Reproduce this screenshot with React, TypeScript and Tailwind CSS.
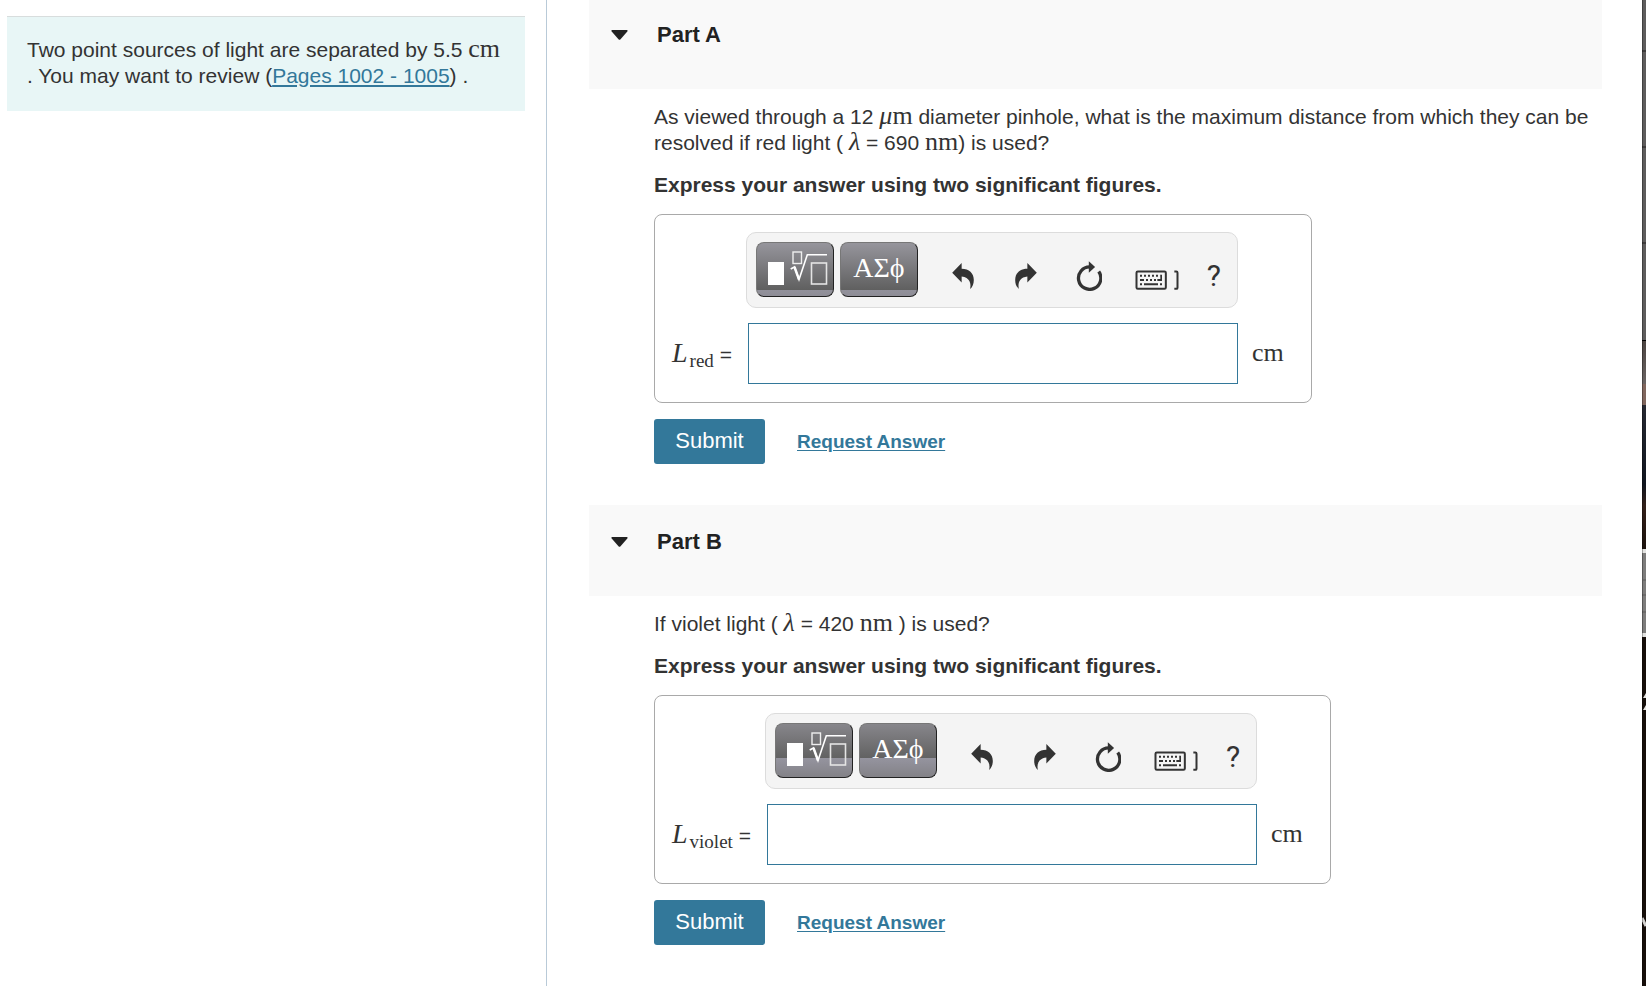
import type { ReactNode } from "react"
import { useState } from "react"

function MathText({ children, italic = false }: { children: ReactNode; italic?: boolean }) {
  return (
    <span className={`font-["Liberation_Serif",serif] text-[26px] leading-[0] ${italic ? "italic" : ""}`}>
      {children}
    </span>
  )
}

function TemplateIcon() {
  return (
    <svg width="76" height="53" viewBox="1 1 76 53" fill="none" stroke="#fff" aria-hidden="true">
      <rect x="12" y="20" width="16" height="23" fill="#fff" stroke="none" />
      <rect x="37" y="10" width="8.5" height="11.5" stroke="#eee" strokeWidth="1.4" />
      <path d="M34.7 27 L38.5 25 L43 37.5 L51.3 12.8 H71" strokeWidth="1.6" />
      <path d="M38.5 25 L43 37.5" strokeWidth="2.4" />
      <rect x="55.5" y="21" width="15" height="21" stroke="#e4e4e4" strokeWidth="1.6" />
    </svg>
  )
}

function UndoIcon({ flip = false }: { flip?: boolean }) {
  return (
    <svg width="22" height="26" viewBox="0 0 64 77" fill="#333" className={flip ? "-scale-x-100" : ""} aria-hidden="true">
      <path d="M0 29 L28 0 V17 C50 17 64 30 64 50 C64 62 60 71 53 77 C57 62 52 42 28 40 V58 Z" />
    </svg>
  )
}

function ResetIcon() {
  return (
    <svg width="26" height="30" viewBox="0 0 79 89" fill="none" aria-hidden="true">
      <path d="M42 17 A34 34 0 1 0 69 31" stroke="#333" strokeWidth="10" />
      <path d="M39 0 L58 17 L39 35 Z" fill="#333" />
    </svg>
  )
}

function KeyboardIcon() {
  return (
    <svg width="44" height="28" viewBox="0 -24 132 84" fill="none" stroke="#333" aria-hidden="true">
      <rect x="4.5" y="4.5" width="88" height="52" rx="4" strokeWidth="6" />
      <path d="M15 17.5 H76" strokeWidth="6" strokeDasharray="6 6" />
      <path d="M15 30 H27 M33 30 H39 M45 30 H51 M57 30 H63 M67 30 H81" strokeWidth="6" />
      <path d="M78.5 14 V33" strokeWidth="5" />
      <path d="M15 42.5 H21 M27 42.5 H69 M75 42.5 H81" strokeWidth="6" />
      <path d="M118 4.5 H124 Q127.5 4.5 127.5 8 V53 Q127.5 56.5 124 56.5 H118" strokeWidth="6" />
    </svg>
  )
}

function Toolbar({ shade }: { shade: string }) {
  const dark = `flex h-[55px] w-[78px] items-center justify-center rounded-lg border border-t-[#777] border-l-[#777] border-r-[#222] border-b-[#222] text-white ${shade}`

  return (
    <div className="flex h-[76px] items-start rounded-[10px] border border-[#dcdcdc] bg-[#f4f4f4] pt-[9px] pr-[10px] pl-[9px]">
      <div className="flex gap-[6px]">
        <button type="button" className={dark} aria-label="Templates">
          <TemplateIcon />
        </button>
        <button type="button" className={`${dark} pb-1 font-["Liberation_Serif",serif] text-[28px] leading-none`}>
          ΑΣϕ
        </button>
      </div>
      <div className="ml-[21px] flex h-[68px] items-center gap-[15px]">
        <button type="button" className="flex w-12 justify-center" aria-label="Undo">
          <UndoIcon />
        </button>
        <button type="button" className="flex w-12 justify-center" aria-label="Redo">
          <UndoIcon flip />
        </button>
        <button type="button" className="flex w-12 justify-center" aria-label="Reset">
          <ResetIcon />
        </button>
        <button type="button" className="flex w-[58px] justify-center" aria-label="Keyboard shortcuts">
          <KeyboardIcon />
        </button>
        <button type="button" className='w-[26px] text-center font-["Roboto",sans-serif] text-[30px] leading-none' aria-label="Help">
          ?
        </button>
      </div>
    </div>
  )
}

type PartProps = {
  id: string
  title: string
  subscript: string
  headerClass: string
  shade: string
  children: ReactNode
}

function Part({ id, title, subscript, headerClass, shade, children }: PartProps) {
  const [answer, setAnswer] = useState("")

  return (
    <section>
      <header className={`flex items-start bg-[#f9f9f9] pl-[22px] ${headerClass}`}>
        <button type="button" className="flex h-[26px] items-center" aria-label={`Toggle ${title}`}>
          <svg width="17" height="10" viewBox="0 0 17 10" fill="#222" aria-hidden="true">
            <path d="M1 0 H16 Q17 0.5 16.3 1.5 L9.5 9.3 Q8.5 10.3 7.5 9.3 L0.7 1.5 Q0 0.5 1 0 Z" />
          </svg>
        </button>
        <h2 className="ml-[29px] text-[22px] leading-[26px] font-bold text-[#222]">{title}</h2>
      </header>

      <form className="pt-[15px] pb-[41px] pl-[65px]" onSubmit={(e) => e.preventDefault()}>
        <p>{children}</p>
        <p className="mt-4 font-bold">Express your answer using two significant figures.</p>

        {/* Answer box */}
        <div className="mt-4 grid w-fit grid-cols-[auto_auto_auto] items-center gap-y-[15px] rounded-lg border border-[#a9a9a9] pt-[17px] pr-[27px] pb-[18px] pl-[17px]">
          <div className="col-start-2">
            <Toolbar shade={shade} />
          </div>
          <label htmlFor={id} className="col-start-1 pr-[14px] whitespace-nowrap">
            <span className='font-["Liberation_Serif",serif] text-[28px] leading-none italic'>L</span>
            <sub className='ml-[2px] font-["Liberation_Serif",serif] text-[19px] leading-none'>{subscript}</sub> =
          </label>
          <input
            id={id}
            type="text"
            value={answer}
            onChange={(e) => setAnswer(e.target.value)}
            className="ml-[2px] h-[61px] border border-[#33789a] bg-white px-3 text-2xl outline-none"
          />
          <span className="pl-[14px]">
            <MathText>cm</MathText>
          </span>
        </div>

        <div className="mt-4 flex items-center">
          <button type="submit" className="h-[45px] w-[111px] rounded-[3px] bg-[#33789a] pb-[2px] text-[22px] text-white">
            Submit
          </button>
          <a href="#" className="ml-8 text-[19px] font-bold text-[#33789a] underline underline-offset-2">
            Request Answer
          </a>
        </div>
      </form>
    </section>
  )
}

// sliver of the desktop behind the window
function DesktopEdge() {
  return (
    <svg className="w-1 shrink-0 self-stretch" viewBox="0 0 4 986" preserveAspectRatio="none" aria-hidden="true">
      <defs>
        <linearGradient id="skin" x1="0" y1="0" x2="0" y2="1">
          <stop offset="0" stopColor="#4b4340" />
          <stop offset="1" stopColor="#6a6463" />
        </linearGradient>
        <linearGradient id="night" x1="0" y1="0" x2="0" y2="1">
          <stop offset="0" stopColor="#272932" />
          <stop offset="0.55" stopColor="#10151f" />
          <stop offset="0.7" stopColor="#33201a" />
          <stop offset="1" stopColor="#1c120d" />
        </linearGradient>
      </defs>
      <rect width="4" height="340" fill="#5e5c5c" />
      <path d="M0 51 H4 M0 147 H4 M0 243 H4" stroke="#3e3c3c" strokeWidth="2" />
      <rect y="340" width="4" height="44" fill="url(#skin)" />
      <rect y="340" width="4" height="1" fill="#000" />
      <rect y="384" width="4" height="21" fill="#80665d" />
      <rect y="405" width="4" height="144" fill="url(#night)" />
      <rect y="549" width="4" height="88" fill="#e2e2e0" />
      <rect y="553" width="4" height="80" fill="#7d7c7b" />
      <path d="M1 580 H4 M0 595 H4 M0 612 H4" stroke="#5c5b5b" />
      <rect y="637" width="4" height="349" fill="#160e0a" />
      <path d="M1 698 L4 693 V698 Z M1 710 L4 705 V710 Z" fill="#e4e2df" />
      <path d="M0 918 L4 926" stroke="#d4d2d0" strokeWidth="3" />
      <rect width="1" height="986" fill="#000" opacity="0.3" />
    </svg>
  )
}

export default function App() {
  return (
    <div className='flex min-h-screen bg-white font-["Liberation_Sans",Arial,sans-serif] text-[21px] leading-[26px] text-[#333]'>
      <aside className="w-[547px] shrink-0 border-r border-[#b9cad8]">
        <div className="mt-4 mr-[21px] ml-[7px] border-t border-[#d8dddd] bg-[#e8f6f6] px-[20px] pt-5 pb-[22px] whitespace-nowrap">
          Two point sources of light are separated by 5.5 <MathText>cm</MathText>
          <br />
          . You may want to review (
          <a href="#" className="text-[#33789a] underline underline-offset-2">
            Pages 1002 - 1005
          </a>
          ) .
        </div>
      </aside>

      <main className="min-w-0 flex-1 pr-10 pl-[42px]">
        <Part
          id="answer-red"
          title="Part A"
          subscript="red"
          headerClass="h-[89px] pt-[22px]"
          shade="bg-[linear-gradient(#96959c,#606060_88%,#92919b_88%,#8e8d96)]"
        >
          As viewed through a 12 <MathText italic>μ</MathText>
          <MathText>m</MathText> diameter pinhole, what is the maximum distance from which they can be
          <br className="hidden min-[1600px]:block" /> resolved if red light ( <MathText italic>λ</MathText> = 690{" "}
          <MathText>nm</MathText>) is used?
        </Part>
        <Part
          id="answer-violet"
          title="Part B"
          subscript="violet"
          headerClass="h-[91px] pt-[24px]"
          shade="bg-[linear-gradient(#87868b,#626262_64%,#95949f_64%,#838287)]"
        >
          If violet light ( <MathText italic>λ</MathText> = 420 <MathText>nm</MathText> ) is used?
        </Part>
      </main>

      <DesktopEdge />
    </div>
  )
}
